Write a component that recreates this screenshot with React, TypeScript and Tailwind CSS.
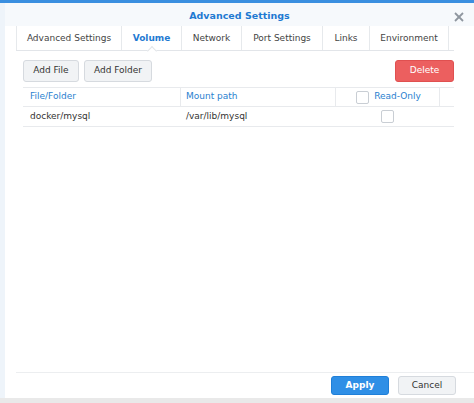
const tabs = [
  { label: 'Advanced Settings', w: 'w-[106px]' },
  { label: 'Volume', w: 'w-[60px]', active: true },
  { label: 'Network', w: 'w-[60px]' },
  { label: 'Port Settings', w: 'w-[81px]' },
  { label: 'Links', w: 'w-[47px]' },
  { label: 'Environment', w: 'w-[79px]' },
];

function Checkbox() {
  return <span className="inline-block h-[13px] w-[13px] rounded-[2px] border border-[#c9ced4] bg-white" />;
}

export default function App() {
  return (
    <div
      className="flex h-[403px] w-[474px] flex-col overflow-hidden bg-white text-[9px] text-[#333]"
      style={{ fontFamily: '"DejaVu Sans", Verdana, sans-serif' }}
    >
      <div className="h-[3px] shrink-0 bg-[#3a8fe0]" />
      <div className="flex min-h-0 flex-1 border-l-[5px] border-[#eef4fa]">
        <div className="flex min-w-0 flex-1 flex-col">
          {/* title bar */}
          <div className="flex h-[23px] shrink-0 items-center bg-[#f6f9fc] pt-[4px]">
            <div className="w-[24px] shrink-0" />
            <span className="flex-1 text-center text-[9.5px] font-bold text-[#1f7ad2]">Advanced Settings</span>
            <div className="flex w-[24px] shrink-0 items-center justify-center pr-[6px]">
              <svg width="10" height="10" viewBox="0 0 10 10" className="block h-[10px] w-[10px] shrink-0">
                <line x1="1" y1="1" x2="9" y2="9" stroke="#8e969f" strokeWidth="1.8" />
                <line x1="9" y1="1" x2="1" y2="9" stroke="#8e969f" strokeWidth="1.8" />
              </svg>
            </div>
          </div>

          {/* tabs */}
          <div className="ml-[11px] mr-[20px] flex h-[25px] shrink-0 border-b border-[#e2e5e9]">
            {tabs.map((t, i) => (
              <div
                key={t.label}
                className={`relative flex ${t.w} items-center justify-center border-r border-[#e6e9ec] pt-[1px] ${i === 0 ? 'border-l' : ''} ${
                  t.active ? 'font-bold text-[#1f7ad2]' : 'text-[#444]'
                }`}
              >
                {t.label}
                {t.active && (
                  <span className="absolute -bottom-[1px] left-1/2 h-[7px] w-[7px] -translate-x-1/2 translate-y-1/2 rotate-45 border-l border-t border-[#e2e5e9] bg-white" />
                )}
              </div>
            ))}
          </div>

          {/* toolbar */}
          <div className="ml-[18px] mr-[20px] mt-[9px] flex shrink-0 items-center">
            <button className="h-[22px] w-[56px] rounded-[3px] border border-[#d6dadf] bg-[#f1f3f5] text-[#333]">Add File</button>
            <button className="ml-[5px] h-[22px] w-[68px] rounded-[3px] border border-[#d6dadf] bg-[#f1f3f5] text-[#333]">Add Folder</button>
            <button className="ml-auto h-[22px] w-[59px] rounded-[3px] border border-[#e05050] bg-[#ec5f5f] text-white">Delete</button>
          </div>

          {/* table */}
          <div className="ml-[18px] mr-[20px] mt-[5px] shrink-0">
            <div className="flex h-[20px] items-center border-y border-[#e8eaed] text-[#2a7fcf]">
              <div className="w-[157px] pl-[7px]">File/Folder</div>
              <div className="flex h-full w-[155px] items-center border-l border-[#e8eaed] pl-[5px]">Mount path</div>
              <div className="flex h-full w-[105px] items-center justify-center gap-[5px] border-x border-[#e8eaed] pl-[2px]">
                <Checkbox />
                <span>Read-Only</span>
              </div>
              <div className="flex-1" />
            </div>
            <div className="flex h-[20px] items-center border-b border-[#e8eaed]">
              <div className="w-[157px] pl-[7px]">docker/mysql</div>
              <div className="w-[155px] pl-[6px]">/var/lib/mysql</div>
              <div className="flex w-[105px] justify-center">
                <Checkbox />
              </div>
            </div>
          </div>

          <div className="flex-1" />

          {/* footer */}
          <div className="ml-[11px] flex h-[26px] shrink-0 items-center justify-end border-t border-[#eceef0] pr-[18px]">
            <button className="h-[19px] w-[58px] rounded-[3px] border border-[#1f7fd8] bg-[#2f8fe6] font-bold text-white">Apply</button>
            <button className="ml-[9px] h-[19px] w-[58px] rounded-[3px] border border-[#d6dadf] bg-[#f1f3f5] text-[#333]">Cancel</button>
          </div>
        </div>
      </div>
      <div className="h-[5px] shrink-0 bg-[#e9e9e9]" />
    </div>
  );
}
